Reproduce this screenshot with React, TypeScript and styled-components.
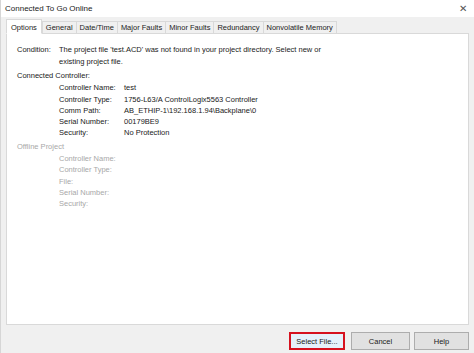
import styled, { createGlobalStyle } from "styled-components";

const GlobalStyle = createGlobalStyle`
  html, body {
    margin: 0;
    padding: 0;
    background: #f0f0f0;
  }
  body {
    font-family: "Liberation Sans", Arial, sans-serif;
  }
`;

const Window = styled.div`
  width: 474px;
  height: 353px;
  display: flex;
  flex-direction: column;
  background: #f0f0f0;
  box-sizing: border-box;
  border-left: 1px solid #d6d6d6;
  overflow: hidden;
`;

const TitleBar = styled.div`
  height: 17px;
  flex-shrink: 0;
  display: flex;
  align-items: center;
  justify-content: space-between;
  background: #ffffff;
  padding: 0 7px 0 4px;
  font-size: 8px;
  color: #1a1a1a;
`;

const Close = styled.span`
  font-size: 10px;
  color: #555;
  line-height: 1;
`;

const Body = styled.div`
  flex: 1;
  display: flex;
  flex-direction: column;
  padding: 2px 5px 0 5px;
`;

const TabStrip = styled.div`
  display: flex;
  align-items: flex-end;
  height: 15px;
  position: relative;
  z-index: 1;
  margin-bottom: -1px;
`;

const Tab = styled.div<{ $active?: boolean }>`
  box-sizing: border-box;
  height: ${(p) => (p.$active ? "15px" : "13px")};
  padding: ${(p) => (p.$active ? "1px 4px 0" : "0 3px")};
  display: flex;
  align-items: center;
  font-size: 7.5px;
  color: #222;
  background: ${(p) => (p.$active ? "#ffffff" : "#f0f0f0")};
  border: 1px solid #d9d9d9;
  border-bottom: ${(p) => (p.$active ? "1px solid #ffffff" : "1px solid #d9d9d9")};
  margin-right: ${(p) => (p.$active ? "0" : "-1px")};
  white-space: nowrap;
`;

const Panel = styled.div`
  box-sizing: border-box;
  height: 292px;
  width: 463px;
  background: #ffffff;
  border: 1px solid #d9d9d9;
  padding: 10px 0 0 10px;
  font-size: 7.5px;
  color: #1a1a1a;
`;

const ConditionRow = styled.div`
  display: flex;
  line-height: 11.5px;
`;

const CondLabel = styled.div`
  width: 42px;
  flex-shrink: 0;
`;

const CondText = styled.div`
  width: 262px;
`;

const Section = styled.div<{ $dim?: boolean }>`
  margin-top: ${(p) => (p.$dim ? "2px" : "3px")};
  margin-bottom: 1px;
  color: ${(p) => (p.$dim ? "#a8a8a8" : "#1a1a1a")};
  line-height: 11.3px;
`;

const Fields = styled.div<{ $dim?: boolean }>`
  display: grid;
  grid-template-columns: 65px 1fr;
  padding-left: 42px;
  line-height: 11.3px;
  color: ${(p) => (p.$dim ? "#a8a8a8" : "#1a1a1a")};
`;

const Footer = styled.div`
  flex: 1;
  display: flex;
  justify-content: flex-end;
  align-items: center;
  gap: 4px;
  padding-right: 0;
`;

const Button = styled.button<{ $focused?: boolean; $w: number }>`
  box-sizing: border-box;
  width: ${(p) => p.$w}px;
  height: 18px;
  font-family: "Liberation Sans", Arial, sans-serif;
  font-size: 7.5px;
  color: #1a1a1a;
  background: ${(p) => (p.$focused ? "#e5f1fb" : "#e1e1e1")};
  border: ${(p) => (p.$focused ? "2px solid #d6121f" : "1px solid #adadad")};
  padding: 0;
  margin-top: 4px;
  margin-right: ${(p) => (p.$focused ? "2px" : "0")};
`;

const controller: [string, string][] = [
  ["Controller Name:", "test"],
  ["Controller Type:", "1756-L63/A ControlLogix5563 Controller"],
  ["Comm Path:", "AB_ETHIP-1\\192.168.1.94\\Backplane\\0"],
  ["Serial Number:", "00179BE9"],
  ["Security:", "No Protection"],
];

const offline = [
  "Controller Name:",
  "Controller Type:",
  "File:",
  "Serial Number:",
  "Security:",
];

const tabs = [
  "Options",
  "General",
  "Date/Time",
  "Major Faults",
  "Minor Faults",
  "Redundancy",
  "Nonvolatile Memory",
];

export default function App() {
  return (
    <>
      <GlobalStyle />
      <Window>
        <TitleBar>
          <span>Connected To Go Online</span>
          <Close>✕</Close>
        </TitleBar>
        <Body>
          <TabStrip>
            {tabs.map((t, i) => (
              <Tab key={t} $active={i === 0}>
                {t}
              </Tab>
            ))}
          </TabStrip>
          <Panel>
            <ConditionRow>
              <CondLabel>Condition:</CondLabel>
              <CondText>
                The project file 'test.ACD' was not found in your project directory. Select new or existing project file.
              </CondText>
            </ConditionRow>
            <Section>Connected Controller:</Section>
            <Fields>
              {controller.flatMap(([k, v]) => [
                <span key={k}>{k}</span>,
                <span key={k + "v"}>{v}</span>,
              ])}
            </Fields>
            <Section $dim>Offline Project</Section>
            <Fields $dim>
              {offline.flatMap((k) => [<span key={k}>{k}</span>, <span key={k + "v"} />])}
            </Fields>
          </Panel>
          <Footer>
            <Button $focused $w={56}>Select File...</Button>
            <Button $w={59}>Cancel</Button>
            <Button $w={55}>Help</Button>
          </Footer>
        </Body>
      </Window>
    </>
  );
}
